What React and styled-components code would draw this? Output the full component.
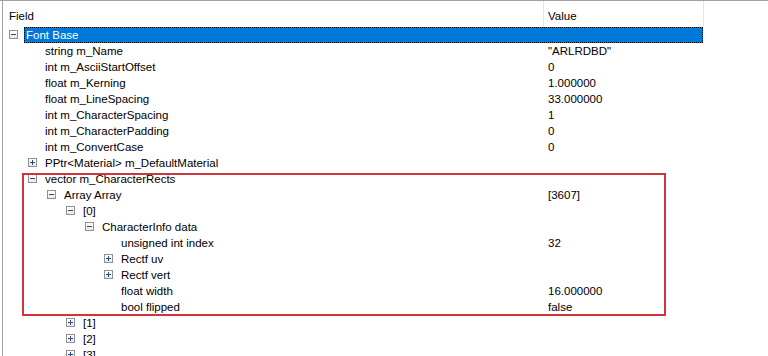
import React from 'react';
import styled, { createGlobalStyle } from 'styled-components';

const GlobalStyle = createGlobalStyle`
  html, body {
    margin: 0;
    padding: 0;
    background: #ffffff;
  }
  body {
    font-family: "Liberation Sans", Arial, sans-serif;
    font-size: 11.5px;
    color: #000;
  }
`;

const Window = styled.div`
  position: relative;
  width: 768px;
  height: 356px;
  overflow: hidden;
  box-sizing: border-box;
  border-top: 1px solid #a0a0a0;
  padding-left: 2px;
  background: #fff;
`;

const TreeView = styled.div`
  height: 100%;
  border-left: 1px solid #a0a0a0;
  display: flex;
  flex-direction: column;
`;

const Header = styled.div`
  display: flex;
  height: 26px;
  flex-shrink: 0;
`;

const HeaderCell = styled.div`
  width: ${p => p.w}px;
  box-sizing: border-box;
  padding-left: ${p => p.pad}px;
  display: flex;
  align-items: center;
  border-right: 1px solid #e5e5e5;
  padding-top: 3px;
`;

const Rows = styled.div`
  display: flex;
  flex-direction: column;
  width: 700px;
`;

const Row = styled.div`
  display: flex;
  height: 16px;
  line-height: 16px;
  white-space: nowrap;
  flex-shrink: 0;
`;

const Gutter = styled.div`
  position: relative;
  width: ${p => 21 + p.level * 19}px;
  flex-shrink: 0;
`;

const ExpanderBox = styled.div`
  position: absolute;
  left: ${p => 6 + p.level * 19}px;
  top: 3px;
  width: 9px;
  height: 9px;
  box-sizing: border-box;
  border: 1px solid #919191;
  background: linear-gradient(#ffffff, #e8e8e8);
  display: flex;
  align-items: center;
  justify-content: center;
`;

const Body = styled.div`
  flex: 1;
  display: flex;
  box-sizing: border-box;
  background: ${p => (p.selected ? '#0078d7' : 'transparent')};
  color: ${p => (p.selected ? '#fff' : '#000')};
  outline: ${p => (p.selected ? '1px dotted #000' : 'none')};
  outline-offset: -1px;
`;

const Label = styled.div`
  flex: 1;
  padding-left: 2px;
`;

const Value = styled.div`
  width: 156px;
  padding-left: 1px;
  box-sizing: border-box;
`;

const Callout = styled.div`
  position: absolute;
  left: 22px;
  top: 172px;
  width: 644px;
  height: 143px;
  box-sizing: border-box;
  border: 2px solid #d1343a;
  pointer-events: none;
`;

const Expander = ({ level, open }) => (
  <ExpanderBox level={level}>
    <svg width="7" height="7" viewBox="0 0 7 7">
      <rect x="1" y="3" width="5" height="1" fill="#2d4a85" />
      {!open && <rect x="3" y="1" width="1" height="5" fill="#2d4a85" />}
    </svg>
  </ExpanderBox>
);

const rows = [
  { level: 0, label: 'Font Base', open: true, selected: true },
  { level: 1, label: 'string m_Name', value: '"ARLRDBD"' },
  { level: 1, label: 'int m_AsciiStartOffset', value: '0' },
  { level: 1, label: 'float m_Kerning', value: '1.000000' },
  { level: 1, label: 'float m_LineSpacing', value: '33.000000' },
  { level: 1, label: 'int m_CharacterSpacing', value: '1' },
  { level: 1, label: 'int m_CharacterPadding', value: '0' },
  { level: 1, label: 'int m_ConvertCase', value: '0' },
  { level: 1, label: 'PPtr<Material> m_DefaultMaterial', open: false },
  { level: 1, label: 'vector m_CharacterRects', open: true },
  { level: 2, label: 'Array Array', open: true, value: '[3607]' },
  { level: 3, label: '[0]', open: true },
  { level: 4, label: 'CharacterInfo data', open: true },
  { level: 5, label: 'unsigned int index', value: '32' },
  { level: 5, label: 'Rectf uv', open: false },
  { level: 5, label: 'Rectf vert', open: false },
  { level: 5, label: 'float width', value: '16.000000' },
  { level: 5, label: 'bool flipped', value: 'false' },
  { level: 3, label: '[1]', open: false },
  { level: 3, label: '[2]', open: false },
  { level: 3, label: '[3]', open: false },
];

export default function App() {
  return (
    <>
      <GlobalStyle />
      <Window>
        <TreeView>
          <Header>
            <HeaderCell w={541} pad={6}>Field</HeaderCell>
            <HeaderCell w={160} pad={4}>Value</HeaderCell>
          </Header>
          <Rows>
            {rows.map((r, i) => (
              <Row key={i}>
                <Gutter level={r.level}>
                  {r.open !== undefined && <Expander level={r.level} open={r.open} />}
                </Gutter>
                <Body selected={r.selected}>
                  <Label>{r.label}</Label>
                  <Value>{r.value}</Value>
                </Body>
              </Row>
            ))}
          </Rows>
        </TreeView>
        <Callout />
      </Window>
    </>
  );
}
